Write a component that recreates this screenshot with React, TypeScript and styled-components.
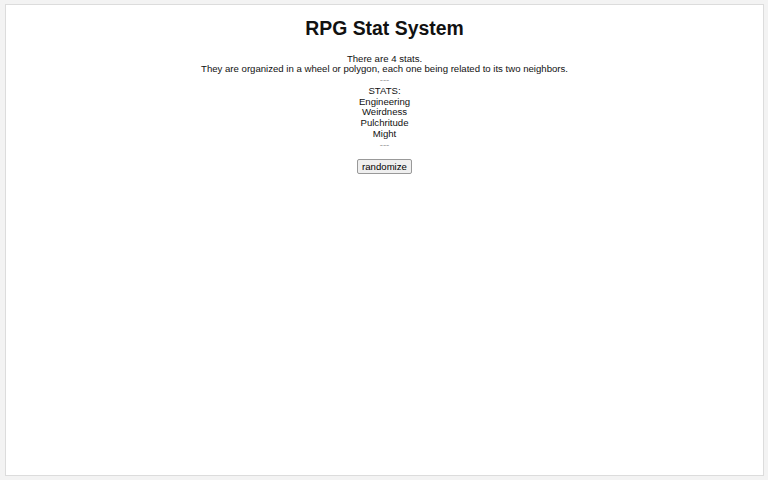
import React from "react";
import styled, { createGlobalStyle } from "styled-components";

const Global = createGlobalStyle`
  html, body { margin: 0; padding: 0; background: #f3f3f3; }
  body { font-family: "Liberation Sans", Arial, sans-serif; }
`;

const Page = styled.div`
  height: 480px;
  box-sizing: border-box;
  padding: 4px 4px 4px 5px;
  display: flex;
`;

const Panel = styled.main`
  flex: 1;
  background: #fff;
  border: 1px solid #dcdcdc;
  display: flex;
  flex-direction: column;
  align-items: center;
  text-align: center;
  color: #111;
`;

const Title = styled.h1`
  margin: 12px 0 14.5px;
  font-size: 19.4px;
  font-weight: bold;
  line-height: 22px;
`;

const Line = styled.div<{ $muted?: boolean }>`
  font-size: 9.6px;
  line-height: 10.75px;
  color: ${(p) => (p.$muted ? "#999" : "#111")};
`;

const Button = styled.button`
  margin-top: 8.5px;
  font-family: "Liberation Sans", Arial, sans-serif;
  font-size: 9.6px;
  line-height: 11px;
  padding: 1px 4px;
  background: #efefef;
  border: 1px solid #999;
  border-radius: 2px;
  color: #000;
`;

const stats = ["Engineering", "Weirdness", "Pulchritude", "Might"];

export default function App() {
  return (
    <>
      <Global />
      <Page>
        <Panel>
          <Title>RPG Stat System</Title>
          <Line>There are {stats.length} stats.</Line>
          <Line>They are organized in a wheel or polygon, each one being related to its two neighbors.</Line>
          <Line $muted>---</Line>
          <Line>STATS:</Line>
          {stats.map((s) => (
            <Line key={s}>{s}</Line>
          ))}
          <Line $muted>---</Line>
          <Button>randomize</Button>
        </Panel>
      </Page>
    </>
  );
}
